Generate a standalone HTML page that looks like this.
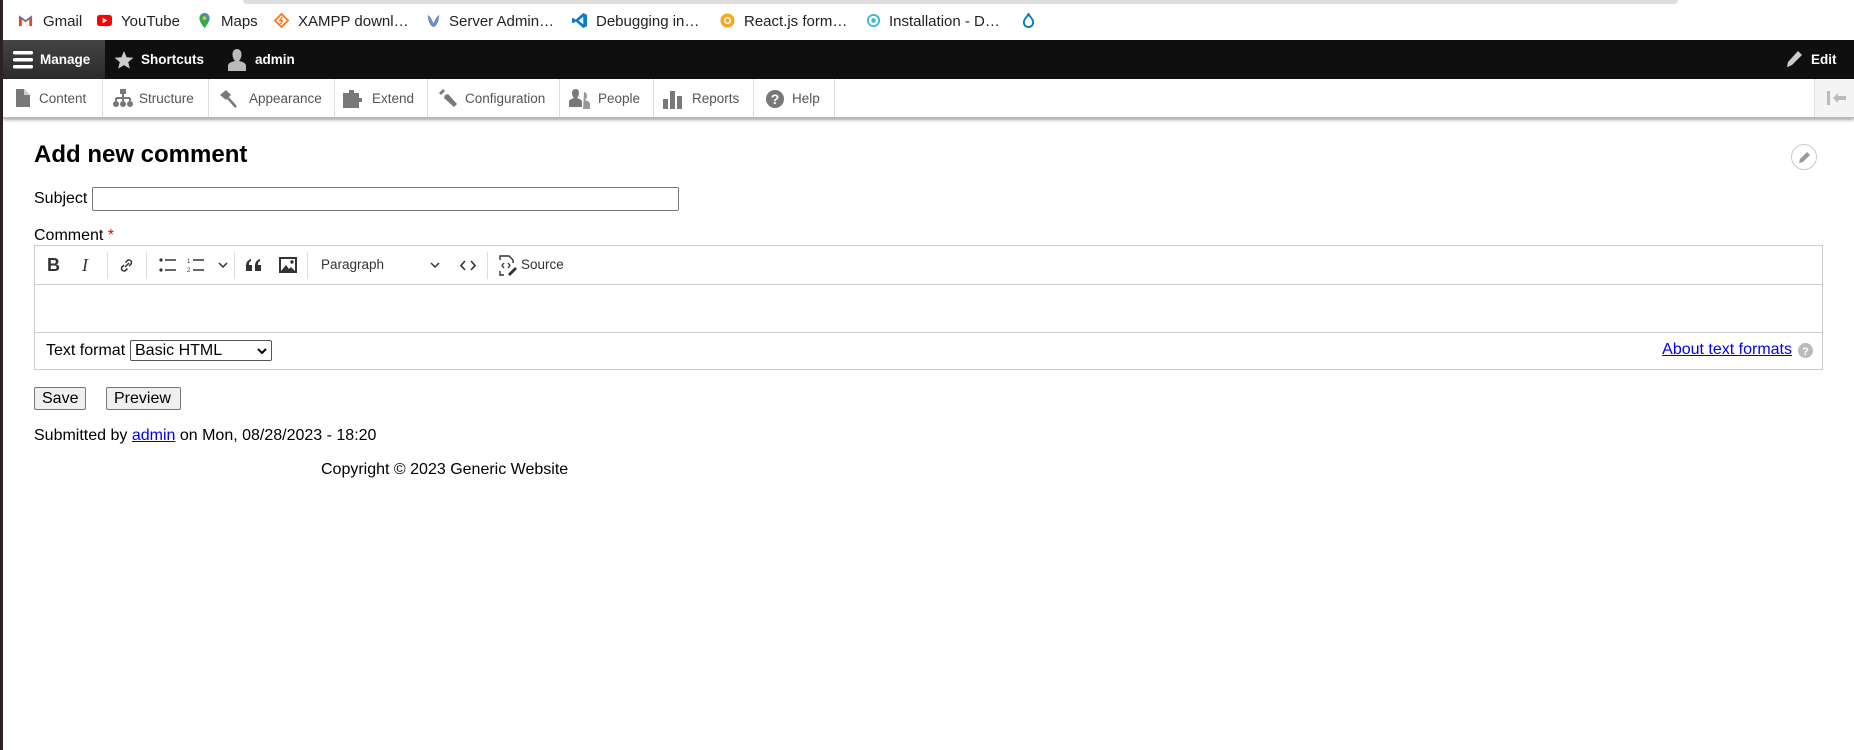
<!DOCTYPE html>
<html><head><meta charset="utf-8"><style>
*{box-sizing:border-box;margin:0;padding:0}
body{width:1854px;height:750px;background:#fff;font-family:"Liberation Sans",sans-serif;position:relative;overflow:hidden;color:#000}
.abs{position:absolute}
.strip{left:0;top:0;width:3px;height:750px;background:#2b2226}
.bm{top:0;left:3px;right:0;height:40px;background:#fff;font-size:15px;color:#222}
.bm .topline{position:absolute;left:240px;width:1435px;top:0;height:4px;background:#ddd;border-radius:0 0 6px 6px}
.bm span{position:absolute;top:13px}
.ic{position:absolute;top:13px;width:15px;height:15px}
.tb{top:40px;left:3px;right:0;height:39px;background:#0f0f0f;color:#fff;font-weight:bold;font-size:13.5px}
.tb span{position:absolute;top:12px}
.tray{top:79px;left:3px;right:0;height:39px;background:#fff;box-shadow:0 2px 3px rgba(0,0,0,.35);border-bottom:1px solid #bbb;font-size:13.5px;color:#555}
.tray .it{position:absolute;top:0;height:38px;border-right:1px solid #ddd}
.tray .it span{position:absolute;top:12px}
.tray svg{position:absolute;top:10px}
h2{position:absolute;left:34px;top:141px;font-size:24px;font-weight:bold}
.lbl{font-size:16px}
.ed{left:34px;top:245px;width:1789px;height:125px;border:1px solid #ccc}
.tool{position:absolute;left:0;top:0;right:0;height:39px;border-bottom:1px solid #ccc}
.sep{position:absolute;top:6px;width:1px;height:27px;background:#ddd}
.ftr{position:absolute;left:0;right:0;top:86px;height:38px;border-top:1px solid #ccc}
.btn{position:absolute;top:387px;height:23px;border:1px solid #777;background:#efefef;border-radius:2px;font-size:16px;padding:2px 7px}
a{color:#00e;text-decoration:underline}
</style></head><body>
<div class="abs strip"></div>
<div class="abs bm"><div class="topline"></div>
<svg class="ic" style="left:15px" viewBox="0 0 16 16"><path d="M1 3v11h3V7l4 3 4-3v7h3V3l-7 5z" fill="#ea4335"/><path d="M1 3l7 5 7-5" stroke="#4285f4" stroke-width="1" fill="none"/></svg><span style="left:40px">Gmail</span>
<svg class="ic" style="left:94px" viewBox="0 0 16 16"><rect x="0" y="2" width="16" height="12" rx="3" fill="#f00"/><path d="M6 5v6l5-3z" fill="#fff"/></svg><span style="left:118px">YouTube</span>
<svg class="ic" style="left:194px" viewBox="0 0 16 16"><path d="M8 0a5.5 5.5 0 0 0-5.5 5.5C2.5 10 8 16 8 16s5.5-6 5.5-10.5A5.5 5.5 0 0 0 8 0z" fill="#34a853"/><path d="M8 0a5.5 5.5 0 0 1 5.5 5.5L8 8z" fill="#4285f4"/><circle cx="8" cy="5.5" r="2" fill="#fbbc04"/></svg><span style="left:218px">Maps</span>
<svg class="ic" style="left:271px" viewBox="0 0 16 16"><path d="M8 1l7 7-7 7-7-7z" fill="none" stroke="#fb7a24" stroke-width="2"/><path d="M9 4l-3 4h3l-2 4" stroke="#fb7a24" stroke-width="1.5" fill="none"/></svg><span style="left:295px">XAMPP downl…</span>
<svg class="ic" style="left:423px" viewBox="0 0 16 16"><path d="M2 2c0 8 3 12 6 13 3-1 6-5 6-13-3 2-4 5-6 9-2-4-3-7-6-9z" fill="#6b8cc8"/></svg><span style="left:446px">Server Admin…</span>
<svg class="ic" style="left:569px" viewBox="0 0 16 16"><path d="M12 0l4 2v12l-4 2-8-7-3 2-1-1V6l1-1 3 2 8-7zm0 4L7 8l5 4z" fill="#0a7bd1"/></svg><span style="left:593px">Debugging in…</span>
<svg class="ic" style="left:717px" viewBox="0 0 16 16"><circle cx="8" cy="8" r="7.5" fill="#f5a623"/><circle cx="8" cy="8" r="3" fill="none" stroke="#fff" stroke-width="1.5"/></svg><span style="left:741px">React.js form…</span>
<svg class="ic" style="left:863px" viewBox="0 0 16 16"><circle cx="8" cy="8" r="6" fill="none" stroke="#3bb9d8" stroke-width="2"/><circle cx="8" cy="8" r="2.5" fill="#3bb9d8"/></svg><span style="left:886px">Installation - D…</span>
<svg class="ic" style="left:1018px" viewBox="0 0 16 16"><path d="M8 1C7 4 3 6 3 10a5 5 0 0 0 10 0c0-4-4-6-5-9z" fill="none" stroke="#0678be" stroke-width="2"/></svg>
</div>
<div class="abs tb">
<div style="position:absolute;left:0;top:0;width:102px;height:39px;background:linear-gradient(#444,#2a2a2a)"></div>
<svg style="position:absolute;left:10px;top:11px" width="20" height="18" viewBox="0 0 20 18"><rect y="0" width="20" height="3.5" rx="1.5" fill="#fff"/><rect y="7" width="20" height="3.5" rx="1.5" fill="#fff"/><rect y="14" width="20" height="3.5" rx="1.5" fill="#fff"/></svg>
<span style="left:37px">Manage</span>
<svg style="position:absolute;left:111px;top:10px" width="20" height="20" viewBox="0 0 20 20"><path d="M10 1l2.6 6.2 6.7.5-5.1 4.4 1.6 6.5L10 15.1l-5.8 3.5 1.6-6.5L.7 7.7l6.7-.5z" fill="#ccc"/></svg>
<span style="left:138px">Shortcuts</span>
<svg style="position:absolute;left:225px;top:9px" width="18" height="22" viewBox="0 0 18 22"><path d="M9 0c3 0 4.5 2.5 4.5 5.5S12 11 11 12c4 1 7 2 7 5v5H0v-5c0-3 3-4 7-5-1-1-2.5-3.5-2.5-6.5S6 0 9 0z" fill="#bbb"/></svg>
<span style="left:252px">admin</span>
<svg style="position:absolute;left:1782px;top:10px" width="18" height="18" viewBox="0 0 18 18"><path d="M13 1l4 4-10 10-5 2 1-5z" fill="#ccc"/><path d="M2 17l1-3 2 2z" fill="#ccc"/></svg>
<span style="left:1808px">Edit</span>
</div>
<div class="abs tray">
<div class="it" style="left:0;width:100px"><svg style="left:13px" width="14" height="18" viewBox="0 0 14 18"><path d="M0 0h8l6 6v12H0z" fill="#787878"/><path d="M8 0v6h6" fill="#ccc"/></svg><span style="left:36px">Content</span></div>
<div class="it" style="left:100px;width:106px"><svg style="left:10px" width="20" height="18" viewBox="0 0 20 18"><rect x="7" y="0" width="6" height="5" fill="#787878"/><path d="M10 5v4M3 9h14M3 9v3M10 9v3M17 9v3" stroke="#787878" stroke-width="2" fill="none"/><circle cx="3" cy="15" r="3" fill="#787878"/><circle cx="10" cy="15" r="3" fill="#787878"/><circle cx="17" cy="15" r="3" fill="#787878"/></svg><span style="left:36px">Structure</span></div>
<div class="it" style="left:206px;width:126px"><svg style="left:9px" width="20" height="20" viewBox="0 0 20 20"><path d="M2 6l6-5 5 5-5 5z" fill="#787878"/><path d="M10 9l8 9" stroke="#787878" stroke-width="2.5"/></svg><span style="left:40px">Appearance</span></div>
<div class="it" style="left:332px;width:93px"><svg style="left:8px" width="22" height="20" viewBox="0 0 22 20"><path d="M0 4h6V1h5v3h5v5h3v4h-3v6H0z" fill="#787878"/></svg><span style="left:37px">Extend</span></div>
<div class="it" style="left:425px;width:132px"><svg style="left:9px" width="20" height="20" viewBox="0 0 20 20"><path d="M2 4l4-4 2 2-2 2 2 2 3-1 9 10-3 3-10-9 1-3-2-2-2 2z" fill="#787878"/></svg><span style="left:37px">Configuration</span></div>
<div class="it" style="left:557px;width:94px"><svg style="left:9px" width="22" height="20" viewBox="0 0 22 20"><path d="M7 0c2 0 3 2 3 4s-1 4-2 5c3 1 5 2 5 4v5H0v-5c0-2 2-3 5-4-1-1-2-3-2-5s1-4 4-4z" fill="#787878"/><path d="M15 3c2 0 3 2 3 4s-1 3-2 4c3 1 5 2 5 4v5h-7" fill="#999"/></svg><span style="left:38px">People</span></div>
<div class="it" style="left:651px;width:100px"><svg style="left:9px" width="20" height="20" viewBox="0 0 20 20"><rect x="0" y="10" width="5" height="10" fill="#787878"/><rect x="7" y="2" width="5" height="18" fill="#787878"/><rect x="14" y="7" width="5" height="13" fill="#787878"/></svg><span style="left:38px">Reports</span></div>
<div class="it" style="left:751px;width:81px"><svg style="left:11px" width="20" height="20" viewBox="0 0 20 20"><circle cx="10" cy="10" r="9" fill="#787878"/><text x="10" y="15" font-size="14" font-weight="bold" fill="#fff" text-anchor="middle" font-family="Liberation Sans">?</text></svg><span style="left:38px">Help</span></div>
<div style="position:absolute;left:1811px;top:0;width:40px;height:38px;border-left:1px solid #ddd;background:#f4f4f4"><svg style="position:absolute;left:12px;top:12px" width="20" height="14" viewBox="0 0 20 14"><rect x="0" y="0" width="3" height="14" fill="#bbb"/><path d="M6 7l5-5v3h8v4h-8v3z" fill="#bbb"/></svg></div>
</div>
<h2>Add new comment</h2>
<div class="abs" style="left:1791px;top:144px;width:26px;height:26px;border:1px solid #ccc;border-radius:50%"><svg style="position:absolute;left:6px;top:6px" width="13" height="13" viewBox="0 0 13 13"><path d="M9 1l3 3-7 7-4 1 1-4z" fill="#999"/></svg></div>
<div class="abs lbl" style="left:34px;top:190px">Subject</div>
<div class="abs" style="left:92px;top:187px;width:587px;height:24px;border:1px solid #767676;border-radius:2px"></div>
<div class="abs lbl" style="left:34px;top:227px">Comment <span style="color:#e00">*</span></div>
<div class="abs ed">
<div class="tool">
<span style="position:absolute;left:12px;top:9px;font-weight:bold;font-size:18px;color:#333">B</span>
<span style="position:absolute;left:47px;top:9px;font-style:italic;font-size:18px;font-family:'Liberation Serif',serif;color:#333">I</span>
<div class="sep" style="left:72px"></div>
<svg style="position:absolute;left:83px;top:11px" width="17" height="17" viewBox="0 0 17 17"><path d="M7 10l4-4M6 8l-2 2a2.5 2.5 0 0 0 3.5 3.5L9.5 11.5M11 9l2-2a2.5 2.5 0 0 0-3.5-3.5L7.5 5.5" stroke="#333" stroke-width="1.5" fill="none"/></svg>
<div class="sep" style="left:111px"></div>
<svg style="position:absolute;left:124px;top:12px" width="18" height="14" viewBox="0 0 18 14"><circle cx="2" cy="2" r="1.6" fill="#333"/><circle cx="2" cy="12" r="1.6" fill="#333"/><path d="M6 2h11M6 12h11" stroke="#333" stroke-width="1.5"/></svg>
<svg style="position:absolute;left:152px;top:11px" width="18" height="16" viewBox="0 0 18 16"><text x="0" y="6" font-size="6" fill="#333" font-family="Liberation Sans">1</text><text x="0" y="15" font-size="6" fill="#333" font-family="Liberation Sans">2</text><path d="M6 3h11M6 13h11" stroke="#333" stroke-width="1.5"/></svg>
<svg style="position:absolute;left:183px;top:16px" width="10" height="7" viewBox="0 0 10 7"><path d="M1 1l4 4 4-4" stroke="#333" stroke-width="1.5" fill="none"/></svg>
<div class="sep" style="left:199px"></div>
<svg style="position:absolute;left:211px;top:13px" width="16" height="12" viewBox="0 0 16 12"><path d="M0 12V7c0-4 2-6 5-7v2C3 3 3 4 3 6h3v6zM9 12V7c0-4 2-6 5-7v2c-2 1-2 2-2 4h3v6z" fill="#333"/></svg>
<svg style="position:absolute;left:244px;top:11px" width="18" height="16" viewBox="0 0 18 16"><rect x="1" y="1" width="16" height="14" fill="none" stroke="#333" stroke-width="2"/><path d="M2 14l5-6 3 4 2-2 4 4z" fill="#333"/><circle cx="13" cy="5" r="1.7" fill="#333"/></svg>
<div class="sep" style="left:272px"></div>
<span style="position:absolute;left:286px;top:11px;font-size:13.5px;color:#333">Paragraph</span>
<svg style="position:absolute;left:395px;top:16px" width="10" height="7" viewBox="0 0 10 7"><path d="M1 1l4 4 4-4" stroke="#333" stroke-width="1.5" fill="none"/></svg>
<svg style="position:absolute;left:425px;top:14px" width="16" height="11" viewBox="0 0 16 11"><path d="M5 1L1 5.5 5 10M11 1l4 4.5-4 4.5" stroke="#333" stroke-width="1.6" fill="none"/></svg>
<div class="sep" style="left:452px"></div>
<svg style="position:absolute;left:464px;top:9px" width="20" height="21" viewBox="0 0 20 21"><path d="M1 5V1h9l4 4v3M1 16v4h4" stroke="#333" stroke-width="1.4" fill="none"/><path d="M5 8l-2 2.5L5 13M9 8l2 2.5L9 13" stroke="#333" stroke-width="1.3" fill="none"/><path d="M9 19l7-7 2 2-7 7z" fill="#333"/></svg>
<span style="position:absolute;left:486px;top:11px;font-size:13.5px;color:#333">Source</span>
</div>
<div class="ftr">
<span style="position:absolute;left:11px;top:9px;font-size:16px">Text format</span>
<div style="position:absolute;left:95px;top:7px;width:142px;height:21px;border:1px solid #555;border-radius:2px;font-size:16px;padding:0 4px;line-height:19px">Basic HTML<svg style="position:absolute;right:4px;top:7px" width="10" height="7" viewBox="0 0 10 7"><path d="M1 1l4 4 4-4" stroke="#000" stroke-width="2" fill="none"/></svg></div>
<a style="position:absolute;right:30px;top:8px;font-size:16px">About text formats</a>
<svg style="position:absolute;right:9px;top:10px" width="15" height="15" viewBox="0 0 15 15"><circle cx="7.5" cy="7.5" r="7.5" fill="#bbb"/><text x="7.5" y="12" font-size="11" font-weight="bold" fill="#fff" text-anchor="middle" font-family="Liberation Sans">?</text></svg>
</div>
</div>
<div class="btn" style="left:34px;width:52px">Save</div>
<div class="btn" style="left:106px;width:75px">Preview</div>
<div class="abs lbl" style="left:34px;top:427px">Submitted by <a>admin</a> on Mon, 08/28/2023 - 18:20</div>
<div class="abs lbl" style="left:321px;top:461px">Copyright © 2023 Generic Website</div>
</body></html>
